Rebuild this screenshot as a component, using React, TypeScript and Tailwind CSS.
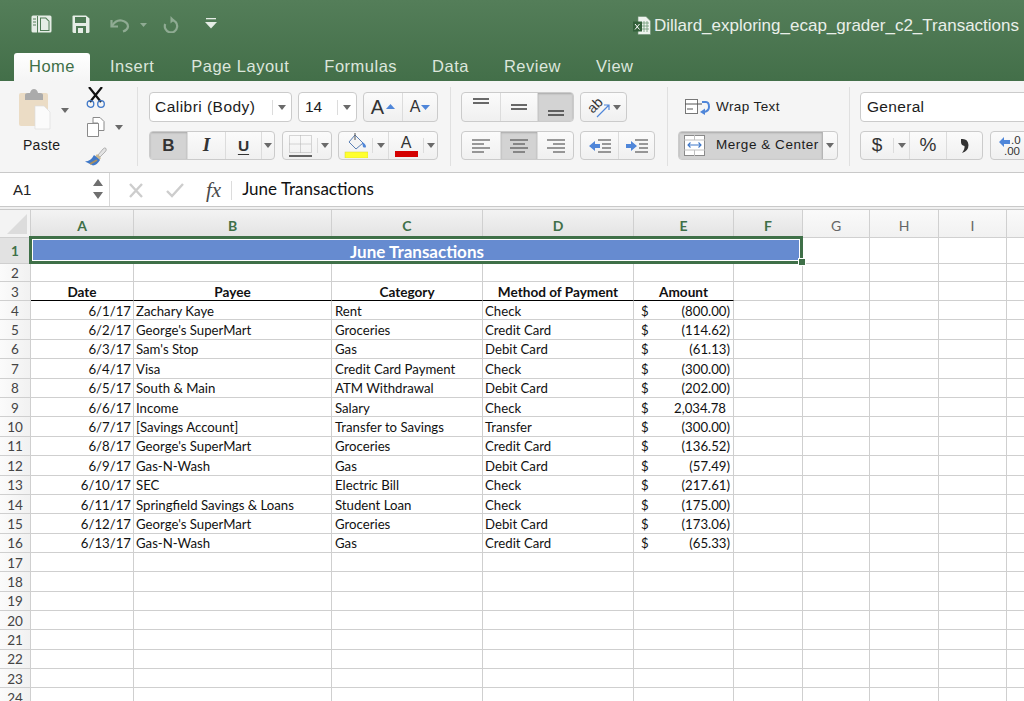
import React from "react";

const UI = "font-[Liberation_Sans,Arial,sans-serif]";
const CELL = "font-[Lato,sans-serif]";
const SERIF = "font-[Liberation_Serif,serif]";
const GRID = "grid grid-cols-[31px_103px_198px_151px_151px_100px_69px_67px_69px_68px_18px]";
const LINE = "border-r border-b border-[#cfcfcf]";

const Arrow = ({ className = "" }: { className?: string }) => (
  <svg width="8" height="5" viewBox="0 0 8 5" className={className}>
    <path d="M0 0H8L4 5Z" fill="#6a6a6a" />
  </svg>
);

const Group = ({ className = "", children }: { className?: string; children: React.ReactNode }) => (
  <div className={`flex border border-[#cbcbcb] rounded-[4px] bg-gradient-to-b from-[#fbfbfb] to-[#f0f0f0] overflow-hidden ${className}`}>
    {children}
  </div>
);

const Btn = ({ w, active, first, children }: { w: string; active?: boolean; first?: boolean; children?: React.ReactNode }) => (
  <div
    className={`flex items-center justify-center h-full ${w} ${first ? "" : "border-l border-[#dcdcdc]"} ${
      active ? "bg-[#d3d3d3] shadow-[inset_0_1px_2px_#a8a8a8]" : ""
    }`}
  >
    {children}
  </div>
);

const Lines = ({ kind }: { kind: "left" | "center" | "right" }) => {
  const d = {
    left: "M1 1H19M1 5H13M1 9H19M1 13H13",
    center: "M1 1H19M4 5H16M1 9H19M4 13H16",
    right: "M1 1H19M7 5H19M1 9H19M7 13H19",
  }[kind];
  return (
    <svg width="20" height="14" viewBox="0 0 20 14">
      <path d={d} stroke="#3a3a3a" strokeWidth="1.2" fill="none" />
    </svg>
  );
};

const VAlign = ({ y }: { y: number }) => (
  <svg width="18" height="28" viewBox="0 0 18 28">
    <path d={`M1 ${y}H17M1 ${y + 4}H17`} stroke="#3a3a3a" strokeWidth="1.3" fill="none" />
  </svg>
);

const Indent = ({ right }: { right?: boolean }) => (
  <svg width="24" height="14" viewBox="0 0 24 14">
    <path d="M10 1H23M14 5H23M14 9H23M10 13H23" stroke="#3a3a3a" strokeWidth="1.2" fill="none" />
    {right ? (
      <path d="M1 5H6V2L12 7L6 12V9H1Z" fill="#4f86d9" />
    ) : (
      <path d="M12 5H7V2L1 7L7 12V9H12Z" fill="#4f86d9" />
    )}
  </svg>
);

const TitleBar = () => (
  <div className="bg-gradient-to-b from-[#547e59] to-[#436f49] h-[81px] shrink-0 flex flex-col">
    <div className="h-[53px] flex items-start pt-[15px]">
      <svg width="22" height="19" viewBox="0 0 22 19" className="ml-[31px]">
        <rect x="0.5" y="0.5" width="20" height="17" rx="1.5" fill="#e6ede6" />
        <path d="M6.5 1V18" stroke="#547e59" strokeWidth="1" />
        <path d="M2 4H5M2 7H5M2 10H5" stroke="#547e59" strokeWidth="1" />
        <path d="M9 2.5H15L18.5 6V16H9Z" fill="#4f7a55" />
        <path d="M10 3.5H14.5L17.5 6.5V15H10Z" fill="#e6ede6" />
      </svg>
      <svg width="18" height="19" viewBox="0 0 18 19" className="ml-[19px]">
        <path d="M1.5 0.5H14L17.5 3.5V16.5Q17.5 18 16 18H2Q0.5 18 0.5 16.5V1.5Q0.5 0.5 1.5 0.5Z" fill="#e6ede6" />
        <rect x="3" y="2" width="11" height="6" fill="#4f7a55" />
        <rect x="4" y="11" width="10" height="7" fill="#4f7a55" />
        <rect x="6" y="13" width="5" height="5" fill="#e6ede6" />
      </svg>
      <svg width="20" height="15" viewBox="0 0 20 15" className="ml-[20px] mt-[3px]">
        <path d="M1.5 2V8.5H8" stroke="#8fab93" strokeWidth="2.2" fill="none" />
        <path d="M2 8Q6 1.5 11.5 2.5Q18 4 18 8.5Q17.5 12 13 13.5" stroke="#8fab93" strokeWidth="2.2" fill="none" />
      </svg>
      <svg width="7" height="4" viewBox="0 0 7 4" className="ml-[10px] mt-[8px]">
        <path d="M0 0H7L3.5 4Z" fill="#8fab93" />
      </svg>
      <svg width="17" height="18" viewBox="0 0 17 18" className="ml-[16px] mt-0">
        <path d="M8 5A6.2 6.2 0 1 1 2.2 9" stroke="#8fab93" strokeWidth="2.2" fill="none" />
        <path d="M7.5 1V8.5L11.5 5Z" fill="#8fab93" />
      </svg>
      <svg width="12" height="11" viewBox="0 0 12 11" className="ml-[25px] mt-[3px]">
        <path d="M1 0.5H11" stroke="#e6ede6" strokeWidth="1.6" />
        <path d="M0 4H12L6 10.5Z" fill="#e6ede6" />
      </svg>
      <div className={`ml-auto flex items-center mr-[5px] ${UI}`}>
        <svg width="18" height="19" viewBox="0 0 18 19" className="mr-[3px] -mt-[2px]">
          <path d="M5 0.5H13L17.5 5V18.5H5Z" fill="#eef3ee" stroke="#6d8f72" strokeWidth="0.6" />
          <path d="M8 7H16M8 10H16M8 13H16M11 5V16M14 5V16" stroke="#6f9a76" strokeWidth="0.8" />
          <rect x="0" y="5.5" width="9" height="10" fill="#33603a" />
          <path d="M2 8L6.5 13.5M6.5 8L2 13.5" stroke="#ffffff" strokeWidth="1" />
        </svg>
        <span className="text-[17px] leading-[22px] text-[#e9efe9]">Dillard_exploring_ecap_grader_c2_Transactions</span>
      </div>
    </div>
    <div className={`h-[28px] flex items-end text-[16.5px] tracking-[0.03em] text-[#dce6dc] ${UI}`}>
      <div className="ml-[14px] w-[76px] h-[28px] pb-[2px] rounded-t-[3px] bg-gradient-to-b from-white to-[#f5f5f5] text-[#3f7048] flex items-center justify-center">Home</div>
      {[
        ["Insert", "ml-[20px]"],
        ["Page Layout", "ml-[37px]"],
        ["Formulas", "ml-[35px]"],
        ["Data", "ml-[35px]"],
        ["Review", "ml-[35px]"],
        ["View", "ml-[35px]"],
      ].map(([t, m]) => (
        <div key={t} className={`h-[28px] pb-[2px] flex items-center ${m}`}>{t}</div>
      ))}
    </div>
  </div>
);

const Sep = () => <div className="w-px h-[79px] mt-[6px] bg-[#e0e0e0] shrink-0" />;

const Clipboard = () => (
  <div className="flex w-[137px] shrink-0">
    <div className="ml-[19px] w-[52px] pt-[8px] flex flex-col">
      <div className="flex items-center">
        <svg width="32" height="41" viewBox="0 0 32 41">
          <rect x="0" y="4" width="29" height="33" rx="2" fill="#ebdcc5" />
          <path d="M6 6Q6 4 9 4H11Q12 0 15 0Q18 0 19 4H21Q24 4 24 6V11H6Z" fill="#ababab" />
          <path d="M16 17H25L31 23V40H16Z" fill="#fbfbfb" stroke="#dedede" strokeWidth="0.7" />
        </svg>
        <Arrow className="ml-[10px] mt-[2px]" />
      </div>
      <span className={`mt-[6px] ml-[4px] text-[14px] leading-[18px] tracking-[0.02em] text-[#1c1c1c] ${UI}`}>Paste</span>
    </div>
    <div className="ml-[16px] flex flex-col pt-[6px]">
      <svg width="20" height="21" viewBox="0 0 20 21" className="-ml-[1px]">
        <path d="M3 0L15 15M16 0L4 15" stroke="#111" strokeWidth="2.2" />
        <circle cx="4.5" cy="17" r="3.3" fill="none" stroke="#3f78c9" strokeWidth="1.3" />
        <circle cx="15" cy="17" r="3.3" fill="none" stroke="#3f78c9" strokeWidth="1.3" />
      </svg>
      <div className="flex items-center mt-[9px]">
        <svg width="18" height="20" viewBox="0 0 18 20">
          <path d="M6 0.5H13L17 4.5V13.5H11V6H6Z" fill="#fff" stroke="#8a8a8a" strokeWidth="1" />
          <path d="M0.5 6.5H11.5V19.5H0.5Z" fill="#fff" stroke="#8a8a8a" strokeWidth="1" />
        </svg>
        <Arrow className="ml-[10px]" />
      </div>
      <svg width="22" height="19" viewBox="0 0 22 19" className="mt-[10px] -ml-[2px]">
        <path d="M13 8L18 2Q20 0 21 1.5Q22 3 20 5L15 10Z" fill="#e3e3e3" stroke="#9a9a9a" strokeWidth="0.7" />
        <path d="M12 7L16 11L13 15L9 11Z" fill="#c9b892" />
        <path d="M9 8L15 13Q12 18 8 18.5L0 14.5Q6 14 9 8Z" fill="#3f78c9" />
        <path d="M5 17L12 13" stroke="#a98f60" strokeWidth="2" />
      </svg>
    </div>
  </div>
);

const FontGroup = () => (
  <div className={`w-[312px] shrink-0 pl-[11px] pt-[11px] flex flex-col gap-[9px] text-[#1c1c1c] ${UI}`}>
    <div className="flex h-[30px] gap-[6px]">
      <div className="w-[143px] bg-white border border-[#cbcbcb] rounded-[4px] flex items-center">
        <span className="ml-[5px] flex-1 text-[15.5px] tracking-[0.03em] whitespace-nowrap">Calibri (Body)</span>
        <div className="w-px h-[15px] bg-[#dcdcdc]" />
        <Arrow className="mx-[5px]" />
      </div>
      <div className="w-[59px] bg-white border border-[#cbcbcb] rounded-[4px] flex items-center">
        <span className="ml-[6px] flex-1 text-[15.5px]">14</span>
        <div className="w-px h-[15px] bg-[#dcdcdc]" />
        <Arrow className="mx-[5px]" />
      </div>
      <Group className="w-[75px]">
        <Btn w="w-[38px]" first>
          <span className="text-[20px] leading-none text-[#333]">A</span>
          <svg width="9" height="5" viewBox="0 0 9 5" className="-mt-[2px] ml-[2px]"><path d="M0 5H9L4.5 0Z" fill="#4f86d9" /></svg>
        </Btn>
        <Btn w="flex-1">
          <span className="text-[16px] leading-none text-[#333]">A</span>
          <svg width="9" height="5" viewBox="0 0 9 5" className="ml-[1px]"><path d="M0 0H9L4.5 5Z" fill="#4f86d9" /></svg>
        </Btn>
      </Group>
    </div>
    <div className="flex h-[29px] gap-[7px]">
      <Group className="w-[126px]">
        <Btn w="w-[37px]" first active><span className="text-[17px] font-bold text-[#333]">B</span></Btn>
        <Btn w="w-[38px]"><span className={`text-[19px] font-bold italic text-[#333] ${SERIF}`}>I</span></Btn>
        <Btn w="w-[36px]"><span className="text-[15.5px] font-bold text-[#333] underline underline-offset-[3px]">U</span></Btn>
        <Btn w="flex-1"><Arrow /></Btn>
      </Group>
      <Group className="w-[50px]">
        <div className="w-[34px] flex items-center justify-center">
          <svg width="23" height="22" viewBox="0 0 23 22">
            <path d="M0.5 0.5H22.5V17.5H0.5ZM0.5 9H22.5M11.5 0.5V17.5" stroke="#b0b0b0" strokeDasharray="1 1" fill="none" />
            <path d="M0 21H23" stroke="#333" strokeWidth="1.4" />
          </svg>
        </div>
        <div className="w-px h-[15px] bg-[#dcdcdc] self-center" />
        <div className="flex-1 flex items-center justify-center"><Arrow /></div>
      </Group>
      <Group className="w-[100px] -ml-[1px]">
        <div className="w-[33px] flex items-center justify-center">
          <svg width="24" height="25" viewBox="0 0 24 25">
            <path d="M11 2L19 10L12 16L5 9Z" fill="#f4f4f4" stroke="#5a7fb5" strokeWidth="1" />
            <path d="M11 0V7" stroke="#555" strokeWidth="1" />
            <path d="M18 9Q22 11 22 14Q21 15 19 14Z" fill="#4f86d9" />
            <rect x="1" y="19" width="23" height="6" fill="#ffff2e" stroke="#d8d830" strokeWidth="0.5" />
          </svg>
        </div>
        <div className="w-px h-[15px] bg-[#dcdcdc] self-center" />
        <div className="w-[15px] flex items-center justify-center"><Arrow /></div>
        <div className="w-[35px] border-l border-[#dcdcdc] flex flex-col items-center justify-center">
          <span className="text-[16px] leading-[15px] text-[#333]">A</span>
          <div className="w-[23px] h-[6px] bg-[#d40000] mt-[1px]" />
        </div>
        <div className="w-px h-[15px] bg-[#dcdcdc] self-center" />
        <div className="flex-1 flex items-center justify-center"><Arrow /></div>
      </Group>
    </div>
  </div>
);

const AlignGroup = () => (
  <div className={`w-[216px] shrink-0 pl-[10px] pt-[11px] flex flex-col gap-[9px] ${UI}`}>
    <div className="flex h-[30px] gap-[6px]">
      <Group className="w-[113px]">
        <Btn w="w-[38px]" first><VAlign y={6} /></Btn>
        <Btn w="w-[37px]"><VAlign y={12} /></Btn>
        <Btn w="flex-1" active><VAlign y={18} /></Btn>
      </Group>
      <Group className="w-[47px]">
        <div className="w-[32px] relative flex items-center justify-center">
          <span className="text-[14px] -rotate-45 text-[#333] leading-none -ml-[5px] -mt-[5px]">ab</span>
          <svg width="14" height="14" viewBox="0 0 14 14" className="absolute left-[15px] top-[11px]">
            <path d="M1 13L13 1M8 1H13V6" stroke="#4f86d9" strokeWidth="1.2" fill="none" />
          </svg>
        </div>
        <div className="flex-1 flex items-center"><Arrow /></div>
      </Group>
    </div>
    <div className="flex h-[29px] gap-[6px]">
      <Group className="w-[113px]">
        <Btn w="w-[38px]" first><Lines kind="left" /></Btn>
        <Btn w="w-[37px]" active><Lines kind="center" /></Btn>
        <Btn w="flex-1"><Lines kind="right" /></Btn>
      </Group>
      <Group className="w-[75px]">
        <Btn w="w-[37px]" first><Indent /></Btn>
        <Btn w="flex-1"><Indent right /></Btn>
      </Group>
    </div>
  </div>
);

const WrapGroup = () => (
  <div className={`w-[181px] shrink-0 pl-[10px] pt-[11px] flex flex-col gap-[9px] text-[#1c1c1c] ${UI}`}>
    <div className="flex h-[30px] items-center pl-[7px]">
      <svg width="25" height="16" viewBox="0 0 25 16">
        <rect x="0.5" y="0.5" width="12" height="14" fill="#fff" stroke="#777" />
        <path d="M0 5H17M2 10H8" stroke="#555" strokeWidth="1" />
        <path d="M17 3H21Q24 3 24 8Q24 12 19 13" stroke="#4f86d9" strokeWidth="2" fill="none" />
        <path d="M20 9.5V16L15 13Z" fill="#4f86d9" />
      </svg>
      <span className="ml-[6px] text-[13.5px] tracking-[0.03em] whitespace-nowrap">Wrap Text</span>
    </div>
    <Group className="w-[160px] h-[29px]">
      <div className="w-[144px] bg-[#d3d3d3] shadow-[inset_0_1px_2px_#a8a8a8] border-r border-[#b5b5b5] flex items-center pl-[5px]">
        <svg width="21" height="21" viewBox="0 0 21 21">
          <rect x="0.5" y="0.5" width="20" height="20" fill="#fff" stroke="#8a8a8a" />
          <path d="M0 5H21M0 15H21M10.5 0V5M10.5 15V21" stroke="#c0c0c0" />
          <path d="M4 10H17M6.5 7.5L4 10L6.5 12.5M14.5 7.5L17 10L14.5 12.5" stroke="#3f78c9" strokeWidth="1.1" fill="none" />
        </svg>
        <span className="ml-[11px] text-[13.5px] tracking-[0.04em] whitespace-nowrap">Merge &amp; Center</span>
      </div>
      <div className="flex-1 flex items-center justify-center"><Arrow /></div>
    </Group>
  </div>
);

const NumberGroup = () => (
  <div className={`flex-1 pl-[10px] pt-[11px] flex flex-col gap-[9px] text-[#333] ${UI}`}>
    <div className="h-[30px] w-[180px] bg-white border border-[#cbcbcb] rounded-l-[4px] flex items-center pl-[6px] text-[15.5px] tracking-[0.02em] text-[#1c1c1c]">General</div>
    <div className="flex h-[29px] gap-[7px]">
      <Group className="w-[123px]">
        <div className="w-[32px] flex items-center justify-center text-[19px]">$</div>
        <div className="w-px h-[15px] bg-[#dcdcdc] self-center" />
        <div className="w-[15px] flex items-center justify-center"><Arrow /></div>
        <Btn w="w-[37px]"><span className="text-[19px]">%</span></Btn>
        <Btn w="flex-1">
          <svg width="9" height="15" viewBox="0 0 9 15">
            <path d="M1 1Q8 0 8.5 7Q8.5 13 2 15Q5 11 4.5 8Q1 7.5 1 4Z" fill="#333" />
          </svg>
        </Btn>
      </Group>
      <div className="w-[60px] flex border border-[#cbcbcb] rounded-l-[4px] bg-gradient-to-b from-[#fbfbfb] to-[#f0f0f0] relative">
        <svg width="11" height="10" viewBox="0 0 11 10" className="absolute left-[8px] top-[5px]">
          <path d="M11 3H5V0L0 5L5 10V7H11Z" fill="#4f86d9" />
        </svg>
        <span className="absolute left-[20px] top-[3px] text-[11.5px] leading-[11px]">.0</span>
        <span className="absolute left-[13px] top-[14px] text-[11.5px] leading-[11px]">.00</span>
      </div>
    </div>
  </div>
);

const FormulaBar = () => (
  <div className="h-[38px] shrink-0 bg-white border-t border-[#c9c9c9] flex relative">
    <div className="w-[110px] border-r border-[#d8d8d8] h-[34px] flex items-center pl-[13px] relative">
      <span className={`text-[15px] text-[#222] ${UI}`}>A1</span>
      <svg width="10" height="20" viewBox="0 0 10 20" className="absolute left-[93px] top-[6px]">
        <path d="M0 7L5 0L10 7ZM0 13L5 20L10 13Z" fill="#6f6f6f" />
      </svg>
    </div>
    <svg width="16" height="15" viewBox="0 0 16 15" className="ml-[18px] mt-[10px]">
      <path d="M2 1L14 14M14 1L2 14" stroke="#cdcdcd" strokeWidth="2.4" />
    </svg>
    <svg width="18" height="15" viewBox="0 0 18 15" className="ml-[22px] mt-[10px]">
      <path d="M1 8L6 13L17 1" stroke="#cdcdcd" strokeWidth="2.4" fill="none" />
    </svg>
    <span className={`ml-[22px] mt-[4px] text-[21px] leading-[26px] italic text-[#4a4a4a] ${SERIF}`}>fx</span>
    <div className="w-px h-[19px] bg-[#dcdcdc] ml-[10px] mt-[8px]" />
    <span className={`ml-[10px] mt-[5px] text-[17px] leading-[22px] text-[#111] ${CELL}`}>June Transactions</span>
    <div className="absolute left-0 right-0 bottom-0 h-[4px] border-y border-[#c9c9c9] bg-[#f0f0f0]" />
  </div>
);

const COLS = ["A", "B", "C", "D", "E", "F", "G", "H", "I", ""];

const Header = () => (
  <div className={`${GRID} h-[28px] ${CELL}`}>
    <div className="bg-[#f3f3f3] border-r border-b border-[#cfcfcf] flex items-end justify-end pr-[3px] pb-[3px]">
      <svg width="20" height="20" viewBox="0 0 20 20"><path d="M20 0V20H0Z" fill="#dcdcdc" /></svg>
    </div>
    {COLS.map((c, i) => (
      <div
        key={i}
        className={`border-r border-b border-[#d0d0d0] flex items-center justify-center pt-[3px] text-[14px] ${
          i < 6
            ? "bg-gradient-to-b from-[#f3f3f3] to-[#e3e3e3] font-bold text-[#3f7048]"
            : "bg-gradient-to-b from-[#fafafa] to-[#f1f1f1] text-[#666]"
        }`}
      >
        {c}
      </div>
    ))}
  </div>
);

const RowNum = ({ n, sel }: { n: number; sel?: boolean }) => (
  <div
    className={`border-r border-b border-[#cfcfcf] flex items-center justify-center pt-[2px] text-[13.5px] ${
      sel ? "bg-[#e2e2e2] font-bold text-[#3f7048]" : "bg-gradient-to-r from-[#fbfbfb] to-[#f1f1f1] text-[#444]"
    }`}
  >
    {n}
  </div>
);

const Rest = () => (
  <>
    <div className={LINE} />
    <div className={LINE} />
    <div className={LINE} />
    <div className={LINE} />
  </>
);

const DATA: [string, string, string, string, string][] = [
  ["6/1/17", "Zachary Kaye", "Rent", "Check", "(800.00)"],
  ["6/2/17", "George's SuperMart", "Groceries", "Credit Card", "(114.62)"],
  ["6/3/17", "Sam's Stop", "Gas", "Debit Card", "(61.13)"],
  ["6/4/17", "Visa", "Credit Card Payment", "Check", "(300.00)"],
  ["6/5/17", "South & Main", "ATM Withdrawal", "Debit Card", "(202.00)"],
  ["6/6/17", "Income", "Salary", "Check", "2,034.78"],
  ["6/7/17", "[Savings Account]", "Transfer to Savings", "Transfer", "(300.00)"],
  ["6/8/17", "George's SuperMart", "Groceries", "Credit Card", "(136.52)"],
  ["6/9/17", "Gas-N-Wash", "Gas", "Debit Card", "(57.49)"],
  ["6/10/17", "SEC", "Electric Bill", "Check", "(217.61)"],
  ["6/11/17", "Springfield Savings & Loans", "Student Loan", "Check", "(175.00)"],
  ["6/12/17", "George's SuperMart", "Groceries", "Debit Card", "(173.06)"],
  ["6/13/17", "Gas-N-Wash", "Gas", "Credit Card", "(65.33)"],
];

const TXT = "flex items-center pt-[2px] whitespace-nowrap overflow-hidden";

const Sheet = () => (
  <div className={`${CELL} text-[13.2px] leading-[15px] text-[#111] shrink-0`}>
    <Header />
    <div className={`${GRID} h-[26px]`}>
      <RowNum n={1} sel />
      <div className="col-span-6 relative bg-[#668bd0] flex items-center justify-center pt-[1px] text-white font-bold text-[17px] leading-[20px]">
        <div className="absolute -left-[2px] -top-[2px] right-0 bottom-0 border-[3px] border-[#3f7048]">
          <div className="h-full border border-white" />
        </div>
        <span className="relative">June Transactions</span>
        <div className="absolute right-[-3px] bottom-[-2px] w-[6px] h-[6px] bg-[#3f7048] border border-white box-content" />
      </div>
      <Rest />
    </div>
    <div className={`${GRID} h-[18px]`}>
      <RowNum n={2} />
      {[0, 1, 2, 3, 4, 5].map((i) => <div key={i} className={LINE} />)}
      <Rest />
    </div>
    <div className={`${GRID} h-[19px]`}>
      <RowNum n={3} />
      {["Date", "Payee", "Category", "Method of Payment", "Amount"].map((h) => (
        <div key={h} className={`${TXT} justify-center font-bold text-[13.6px] border-r border-[#cfcfcf] border-b border-b-black`}>{h}</div>
      ))}
      <div className={LINE} />
      <Rest />
    </div>
    {DATA.map((r, i) => (
      <div key={i} className={`${GRID} h-[19.4px]`}>
        <RowNum n={i + 4} />
        <div className={`${TXT} ${LINE} justify-end pr-[2px]`}>{r[0]}</div>
        <div className={`${TXT} ${LINE} pl-[2px]`}>{r[1]}</div>
        <div className={`${TXT} ${LINE} pl-[3px]`}>{r[2]}</div>
        <div className={`${TXT} ${LINE} pl-[2px]`}>{r[3]}</div>
        <div className={`${TXT} ${LINE} justify-between pl-[7px] ${r[4].startsWith("(") ? "pr-[3px]" : "pr-[7px]"}`}>
          <span>$</span>
          <span>{r[4]}</span>
        </div>
        <div className={LINE} />
        <Rest />
      </div>
    ))}
    {[17, 18, 19, 20, 21, 22, 23, 24].map((n) => (
      <div key={n} className={`${GRID} h-[19.3px]`}>
        <RowNum n={n} />
        {[0, 1, 2, 3, 4, 5].map((i) => <div key={i} className={LINE} />)}
        <Rest />
      </div>
    ))}
  </div>
);

export default function App() {
  return (
    <div className="w-[1024px] h-[701px] overflow-hidden bg-white flex flex-col">
      <TitleBar />
      <div className="h-[91px] bg-[#f5f5f5] flex shrink-0">
        <Clipboard />
        <Sep />
        <FontGroup />
        <Sep />
        <AlignGroup />
        <Sep />
        <WrapGroup />
        <Sep />
        <NumberGroup />
      </div>
      <FormulaBar />
      <Sheet />
    </div>
  );
}
